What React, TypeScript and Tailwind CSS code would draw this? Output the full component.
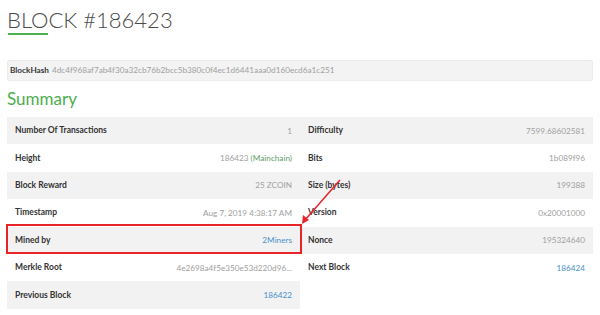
const left = [
  { label: "Number Of Transactions", value: "1" },
  { label: "Height", value: "186423", extra: "(Mainchain)" },
  { label: "Block Reward", value: "25 ZCOIN" },
  { label: "Timestamp", value: "Aug 7, 2019 4:38:17 AM" },
  { label: "Mined by", value: "2Miners", link: true },
  { label: "Merkle Root", value: "4e2698a4f5e350e53d220d96..." },
  { label: "Previous Block", value: "186422", link: true },
];

const right = [
  { label: "Difficulty", value: "7599.68602581" },
  { label: "Bits", value: "1b089f96" },
  { label: "Size (bytes)", value: "199388" },
  { label: "Version", value: "0x20001000" },
  { label: "Nonce", value: "195324640" },
  { label: "Next Block", value: "186424", link: true },
];

type Row = { label: string; value: string; extra?: string; link?: boolean };

function Column({ rows }: { rows: Row[] }) {
  return (
    <div className="flex flex-col">
      {rows.map((r, i) => (
        <div
          key={r.label}
          className={`h-[27.4px] flex items-center justify-between px-[8px] ${
            i % 2 === 0 ? "bg-[#f2f2f2]" : "bg-white"
          }`}
        >
          <span className="text-[8.5px] font-bold text-[#333]">{r.label}</span>
          <span className={`text-[8.2px] ${r.link ? "text-[#4a8fc9]" : "text-[#a0a0a0]"}`}>
            {r.value}
            {r.extra && <span className="text-[#5f9a68]"> {r.extra}</span>}
          </span>
        </div>
      ))}
    </div>
  );
}

export default function App() {
  return (
    <div className="relative w-[600px] h-[315px] overflow-hidden bg-white px-[7px] font-['Lato','Liberation_Sans',sans-serif]">
      <h1 className="pt-[7px] text-[22px] leading-[26px] font-light text-[#4a4a4a]">
        BLOCK #186423
      </h1>
      <div className="ml-px h-[2px] w-[40px] bg-[#4cae4c]" />

      <div className="mt-[25px] h-[21px] flex items-center gap-[3px] rounded-[2px] border border-[#ececec] bg-[#f3f3f3] px-[2px] text-[8.2px]">
        <span className="font-bold text-[#333]">BlockHash</span>
        <span className="text-[#a0a0a0]">
          4dc4f968af7ab4f30a32cb76b2bcc5b380c0f4ec1d6441aaa0d160ecd6a1c251
        </span>
      </div>

      <h2 className="mt-[7px] text-[17px] leading-[22px] text-[#4cae4c]">Summary</h2>

      <div className="mt-[7px] grid grid-cols-2">
        <Column rows={left} />
        <Column rows={right} />
      </div>

      <div className="absolute left-[6px] top-[224px] h-[30px] w-[296px] border-2 border-[#e8242a]" />
      <svg className="absolute left-0 top-0" width="600" height="315" viewBox="0 0 600 315">
        <line x1="340" y1="180" x2="305" y2="220" stroke="#e8242a" strokeWidth="1.5" />
        <polygon points="302,224 303,215 309,220" fill="#e8242a" />
      </svg>
    </div>
  );
}
